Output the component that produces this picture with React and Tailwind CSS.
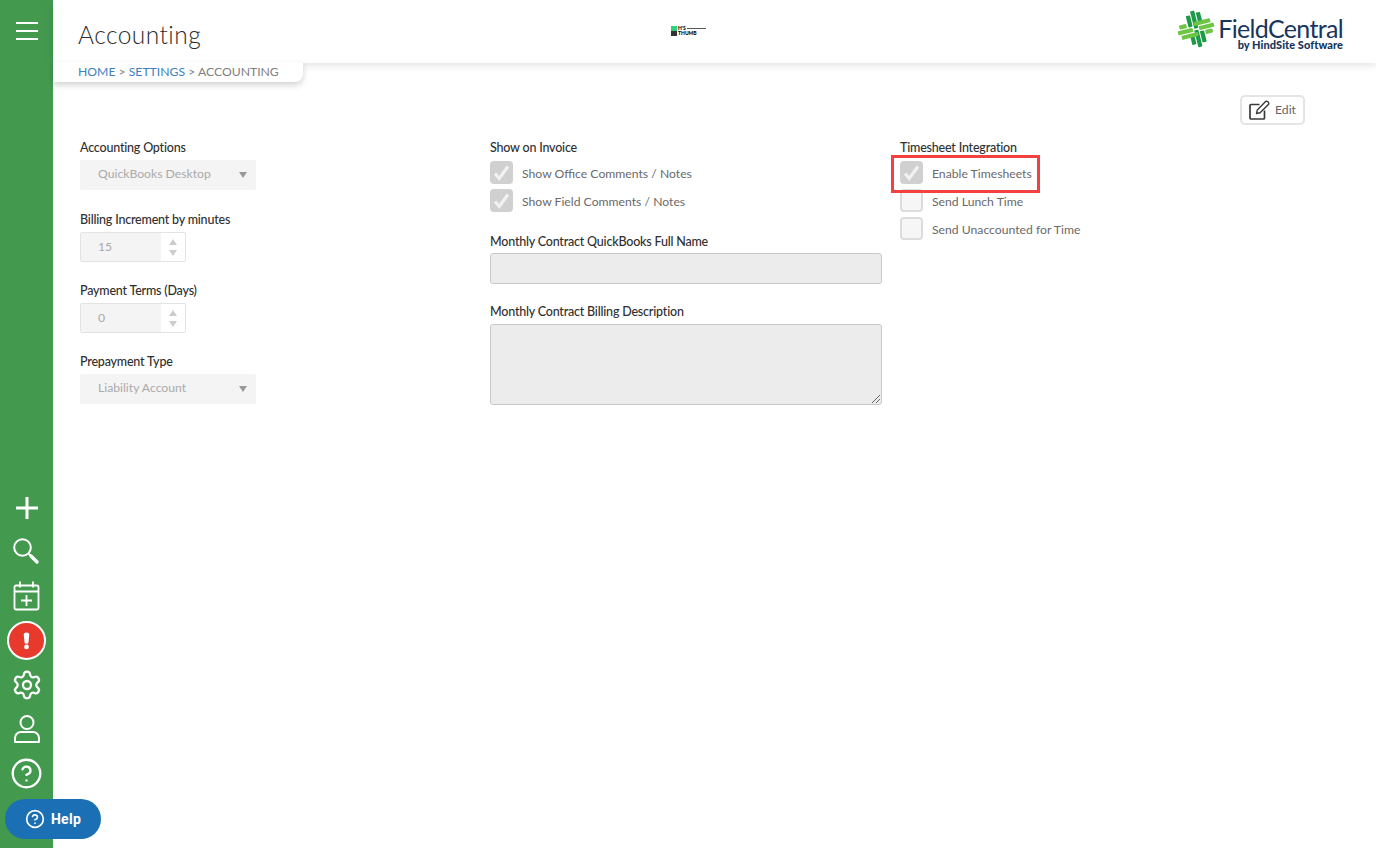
import React from "react";
import { Settings, CircleHelp } from "lucide-react";

function Label({ children, className = "" }) {
  return <div className={`h-[18px] pt-px text-[12.5px] leading-[18px] tracking-[-0.2px] text-[#2f2f2f] font-medium ${className}`}>{children}</div>;
}

function Check({ checked, label }) {
  return (
    <div className="flex items-center h-[28px]">
      <div
        className={`w-[23px] h-[23px] rounded-[4px] flex items-center justify-center border-2 ${
          checked ? "bg-[#d0d0d0] border-[#d0d0d0]" : "bg-[#f6f6f6] border-[#dcdcdc]"
        }`}
      >
        {checked && (
          <svg width="19" height="19" viewBox="0 0 19 19" fill="none">
            <path d="M3 10.5l4.2 5L16 3.5" stroke="#f2f2f2" strokeWidth="3.2" />
          </svg>
        )}
      </div>
      <span className="ml-[9px] pt-[5px] text-[12.2px] text-[#6a6a6a]">{label}</span>
    </div>
  );
}

function FakeSelect({ value }) {
  return (
    <div className="w-[176px] h-[30px] bg-[#f4f4f4] rounded-[2px] flex items-center justify-between pl-[18px] pr-[9px] mt-[4px]">
      <span className="pb-px text-[12.2px] text-[#aaa]">{value}</span>
      <span className="w-0 h-0 border-x-[4px] border-x-transparent border-t-[6px] border-t-[#999]" />
    </div>
  );
}

function Spinner({ value }) {
  return (
    <div className="w-[106px] h-[30px] bg-white border border-[#e3e3e3] rounded-[2px] flex mt-[4px]">
      <div className="w-[80px] bg-[#f4f4f4] pl-[17px] flex items-center text-[12.2px] text-[#aaa]">{value}</div>
      <div className="flex-1 flex flex-col items-center justify-center gap-[5px]">
        <span className="w-0 h-0 border-x-[4px] border-x-transparent border-b-[6px] border-b-[#ccc]" />
        <span className="w-0 h-0 border-x-[4px] border-x-transparent border-t-[6px] border-t-[#ccc]" />
      </div>
    </div>
  );
}

function Logo() {
  return (
    <svg width="38" height="38" viewBox="0 0 36 36" className="shrink-0">
      <g transform="rotate(-14 18 18)">
        <g fill="#1c9a47">
          <rect x="11.5" y="4" width="4" height="11" rx="0.8" />
          <rect x="16.5" y="0.5" width="4" height="17" rx="0.8" />
          <rect x="21.5" y="3" width="4" height="9" rx="0.8" />
          <rect x="11" y="24" width="4" height="8" rx="0.8" />
          <rect x="16" y="19" width="4" height="16.5" rx="0.8" />
          <rect x="21" y="21" width="4" height="11" rx="0.8" />
        </g>
        <g fill="#6cc644">
          <rect x="3" y="11" width="7" height="4" rx="0.8" />
          <rect x="0.5" y="16" width="14.5" height="4" rx="0.8" />
          <rect x="3" y="21" width="16" height="4" rx="0.8" />
          <rect x="17" y="11" width="16" height="4" rx="0.8" />
          <rect x="21" y="16" width="14.5" height="4" rx="0.8" />
          <rect x="26" y="21" width="7" height="4" rx="0.8" />
        </g>
      </g>
    </svg>
  );
}

function MagnifierIcon() {
  return (
    <svg width="28" height="28" viewBox="0 0 28 28" fill="none" stroke="white">
      <circle cx="10.5" cy="10.5" r="8.3" strokeWidth="2" />
      <path d="M16.6 16.6L19 19" strokeWidth="2" />
      <path d="M19 19l6 6" strokeWidth="3.4" strokeLinecap="round" />
    </svg>
  );
}

function CalendarAddIcon() {
  return (
    <svg width="27" height="30" viewBox="0 0 27 30" fill="none" stroke="white" strokeWidth="1.8">
      <rect x="1.5" y="4.5" width="24" height="24" rx="1.5" />
      <path d="M1.5 10.5h24M7 0.5v6M20 0.5v6M13.5 14v11M8 19.5h11" />
    </svg>
  );
}

function AlertMark() {
  return (
    <svg width="7" height="18" viewBox="0 0 10 24" fill="white">
      <path d="M1 2.5a4 2.5 0 0 1 8 0L7.8 14a2.8 2 0 0 1-5.6 0z" />
      <circle cx="5" cy="20.5" r="3.4" />
    </svg>
  );
}

function UserIcon() {
  return (
    <svg width="28" height="30" viewBox="0 0 28 30" fill="none" stroke="white" strokeWidth="2">
      <circle cx="14" cy="8.5" r="6.5" />
      <path d="M2 28v-4a6 6 0 0 1 6-6h12a6 6 0 0 1 6 6v4z" strokeLinejoin="round" />
    </svg>
  );
}

function EditIcon() {
  return (
    <svg width="21" height="20" viewBox="0 0 21 20" fill="none" stroke="#3a3a3a">
      <path d="M15.5 10.5V18a1 1 0 0 1-1 1H2a1 1 0 0 1-1-1V5.5a1 1 0 0 1 1-1h8.5" strokeWidth="1.7" />
      <path d="M7.5 13.5l.8-3.6L16.6 1.6a1.4 1.4 0 0 1 2 0l.8.8a1.4 1.4 0 0 1 0 2l-8.3 8.3z" strokeWidth="1.4" strokeLinejoin="round" />
    </svg>
  );
}

export default function App() {
  return (
    <div className="relative flex h-[848px] w-[1376px] overflow-hidden bg-white font-['Lato',sans-serif]">
      <aside className="w-[53px] shrink-0 bg-[#439a4f] flex flex-col items-center justify-between pt-[22px] pb-[53px]">
        <div className="w-[22px] flex flex-col gap-[6px]">
          <span className="block h-[2px] bg-white" />
          <span className="block h-[2px] bg-white" />
          <span className="block h-[2px] bg-white" />
        </div>
        <div className="flex flex-col items-center text-white">
          <div className="h-[44px] pt-[2px] flex items-center justify-center">
            <svg width="24" height="24" viewBox="0 0 24 24" stroke="white" strokeWidth="3"><path d="M12 1v22M1 12h22" /></svg>
          </div>
          <div className="h-[44px] flex items-center justify-center -translate-x-[1px]"><MagnifierIcon /></div>
          <div className="h-[46px] flex items-center justify-center"><CalendarAddIcon /></div>
          <div className="h-[43px] flex items-center justify-center">
            <div className="w-[39px] h-[39px] rounded-full bg-[#e8392d] border-2 border-white flex items-center justify-center"><AlertMark /></div>
          </div>
          <div className="h-[45px] flex items-center justify-center"><Settings size={32} strokeWidth={1.7} /></div>
          <div className="h-[44px] flex items-center justify-center"><UserIcon /></div>
          <div className="h-[44px] flex items-center justify-center"><CircleHelp size={33} strokeWidth={1.7} /></div>
        </div>
      </aside>

      <div className="flex-1 flex flex-col min-w-0">
        <header className="relative h-[63px] shrink-0 bg-white shadow-[0_2px_8px_rgba(0,0,0,0.12)] flex items-start justify-between pl-[25px] pr-[33px]">
          <h1 className="mt-[18px] text-[24.5px] leading-[34px] tracking-[0.45px] font-light text-[#2b2b2b]">Accounting</h1>
          <div className="absolute left-[618px] top-[26px] flex items-center gap-[1px]">
            <svg width="6" height="10" viewBox="0 0 6 10"><rect y="0" width="6" height="5" fill="#2fd07c" /><rect y="5" width="6" height="5" fill="#333" /></svg>
            <div className="text-[5px] leading-[5px] font-black text-black">
              <div>H'S<span className="inline-block w-[19px] h-px bg-[#555] align-middle ml-[1px]" /></div>
              <div>THUMB</div>
            </div>
          </div>
          <div className="flex mt-[10px] gap-[3px]">
            <Logo />
            <div className="flex flex-col items-end pt-[4px]">
              <div className="text-[25px] leading-[28px] font-normal text-[#17365d] tracking-[-0.65px]">FieldCentral</div>
              <div className="-mt-[3px] text-[11px] leading-[11px] font-black tracking-[0.05px] text-[#17365d]">by HindSite Software</div>
            </div>
          </div>
        </header>
        <div className="relative self-start w-[250px] h-[20px] bg-white rounded-br-[8px] shadow-[0_3px_6px_rgba(0,0,0,0.18)] pl-[25px] pt-px text-[12.2px] leading-[17px] text-[#808080] -mt-px">
          <a className="text-[#3f81bd]">HOME</a> {">"} <a className="text-[#3f81bd]">SETTINGS</a> {">"} ACCOUNTING
        </div>

        <div className="flex justify-end pr-[71px] pt-[13px]">
          <button className="w-[65px] h-[30px] border-2 border-[#e4e4e4] rounded-[5px] flex items-center justify-center gap-[5px] text-[12.2px] text-[#666]">
            <EditIcon />
            <span className="pt-px">Edit</span>
          </button>
        </div>

        <main className="grid grid-cols-[410px_410px_300px] pl-[27px] pt-[13px]">
          <section>
            <Label>Accounting Options</Label>
            <FakeSelect value="QuickBooks Desktop" />
            <Label className="mt-[20px]">Billing Increment by minutes</Label>
            <Spinner value="15" />
            <Label className="mt-[19px]">Payment Terms (Days)</Label>
            <Spinner value="0" />
            <Label className="mt-[19px]">Prepayment Type</Label>
            <FakeSelect value="Liability Account" />
          </section>

          <section>
            <Label>Show on Invoice</Label>
            <div className="mt-[2px]">
              <Check checked label="Show Office Comments / Notes" />
              <Check checked label="Show Field Comments / Notes" />
            </div>
            <Label className="mt-[18px]">Monthly Contract QuickBooks Full Name</Label>
            <div className="mt-[3px] w-[392px] h-[31px] bg-[#ececec] border border-[#c9c9c9] rounded-[3px]" />
            <Label className="mt-[18px]">Monthly Contract Billing Description</Label>
            <div className="relative mt-[4px] w-[392px] h-[81px] bg-[#ececec] border border-[#c9c9c9] rounded-[3px]">
              <svg width="9" height="9" viewBox="0 0 9 9" className="absolute right-[1px] bottom-[1px]" stroke="#666" strokeWidth="1">
                <path d="M1 9L9 1M5 9l4-4" />
              </svg>
            </div>
          </section>

          <section>
            <Label>Timesheet Integration</Label>
            <div className="mt-[2px]">
              <Check checked label="Enable Timesheets" />
              <Check label="Send Lunch Time" />
              <Check label="Send Unaccounted for Time" />
            </div>
          </section>
        </main>
      </div>

      <div className="absolute left-[891px] top-[155px] w-[149px] h-[38px] border-[3px] border-[#f34040]" />

      <button className="absolute left-[5px] top-[799px] w-[96px] h-[40px] rounded-full bg-[#1b6fb5] flex items-center justify-center gap-[6px] text-white text-[14px] font-bold tracking-[0.3px] font-['Roboto',sans-serif]">
        <CircleHelp size={20} strokeWidth={2} />
        Help
      </button>
    </div>
  );
}
